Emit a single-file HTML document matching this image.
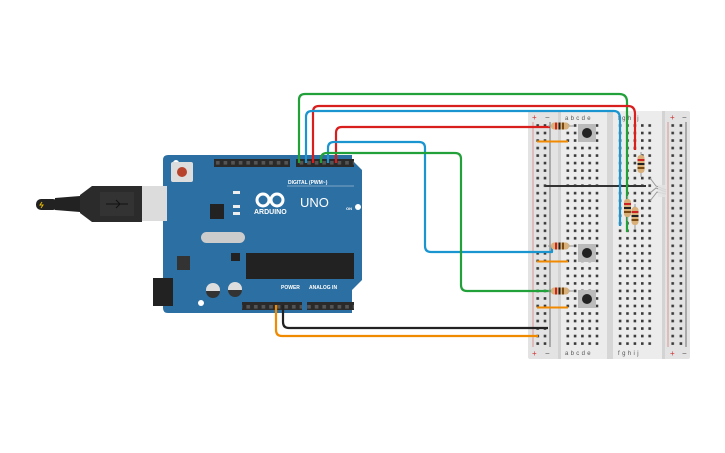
<!DOCTYPE html>
<html><head><meta charset="utf-8"><style>
html,body{margin:0;padding:0;background:#fff;overflow:hidden}
svg{display:block;font-family:"Liberation Sans",sans-serif}
</style></head><body>
<svg width="725" height="453" viewBox="0 0 725 453" xmlns="http://www.w3.org/2000/svg">
<defs>
<pattern id="hd" x="0" y="0" width="7.3" height="7.52" patternUnits="userSpaceOnUse" patternTransform="translate(566.5 122.2)">
<rect x="0" y="2" width="2.6" height="2.6" fill="#3a3a3a"/></pattern>
<pattern id="hd2" x="0" y="0" width="7.4" height="7.52" patternUnits="userSpaceOnUse" patternTransform="translate(618.8 122.2)">
<rect x="0" y="2" width="2.6" height="2.6" fill="#3a3a3a"/></pattern>
<pattern id="rd" x="0" y="0" width="7.3" height="7.52" patternUnits="userSpaceOnUse" patternTransform="translate(536.4 122.2)">
<rect x="0" y="2" width="2.6" height="2.6" fill="#3a3a3a"/></pattern>
<pattern id="rd2" x="0" y="0" width="8.2" height="7.52" patternUnits="userSpaceOnUse" patternTransform="translate(671.4 122.2)">
<rect x="0" y="2" width="2.6" height="2.6" fill="#3a3a3a"/></pattern>
<pattern id="pin" x="0" y="0" width="7.6" height="8" patternUnits="userSpaceOnUse" patternTransform="translate(214 159)">
<rect x="0" y="0" width="7.6" height="8" fill="#2a2a2a"/><rect x="2" y="2" width="3.6" height="3.6" fill="#555"/></pattern>
</defs>

<!-- Breadboard -->
<rect x="528" y="111" width="162" height="248" rx="2" fill="#e3e3e3"/>
<rect x="560" y="111" width="48" height="248" fill="#ececec"/>
<rect x="612" y="111" width="50" height="248" fill="#ececec"/>
<rect x="607" y="111" width="6" height="248" fill="#d6d6d6"/>
<rect x="662" y="111" width="3" height="248" fill="#d3d3d3"/>
<rect x="558" y="111" width="3" height="248" fill="#d3d3d3"/>
<line x1="533" y1="122" x2="533" y2="347" stroke="#d98080" stroke-width="0.8"/>
<line x1="550" y1="122" x2="550" y2="347" stroke="#555" stroke-width="0.8"/>
<line x1="668" y1="122" x2="668" y2="347" stroke="#d98080" stroke-width="0.8"/>
<line x1="686" y1="122" x2="686" y2="347" stroke="#555" stroke-width="0.8"/>
<rect x="536" y="122" width="12" height="226" fill="url(#rd)"/>
<rect x="671" y="122" width="13" height="226" fill="url(#rd2)"/>
<rect x="566" y="122" width="34" height="226" fill="url(#hd)"/>
<rect x="618" y="122" width="36" height="226" fill="url(#hd2)"/>
<g font-size="6" fill="#555">
<text x="532" y="120" fill="#c33" font-size="8">+</text><text x="545" y="120" font-size="8">−</text>
<text x="670" y="120" fill="#c33" font-size="8">+</text><text x="682" y="120" font-size="8">−</text>
<text x="532" y="356" fill="#c33" font-size="8">+</text><text x="545" y="356" font-size="8">−</text>
<text x="670" y="356" fill="#c33" font-size="8">+</text><text x="682" y="356" font-size="8">−</text>
<text x="565" y="120" letter-spacing="2.3">abcde</text><text x="565" y="355" letter-spacing="2.3">abcde</text>
<text x="618" y="120" letter-spacing="2.4">fghij</text><text x="618" y="355" letter-spacing="2.4">fghij</text>
</g>

<!-- Buttons -->
<g fill="#bbb">
<rect x="578" y="124" width="18" height="18"/><rect x="578" y="244" width="18" height="18"/><rect x="578" y="290" width="18" height="18"/></g>
<g fill="#222"><circle cx="587" cy="133" r="5"/><circle cx="587" cy="253" r="5"/><circle cx="587" cy="299" r="5"/></g>

<!-- Orange jumpers on breadboard -->
<g stroke="#f08a00" stroke-width="2"><line x1="537" y1="141.5" x2="568" y2="141.5"/><line x1="537" y1="261.5" x2="568" y2="261.5"/><line x1="537" y1="307.5" x2="568" y2="307.5"/></g>
<line x1="545" y1="186" x2="646" y2="186" stroke="#333" stroke-width="2"/>

<!-- Arduino board -->
<path d="M163 160 Q163 155 168 155 L352 155 L352 160 L362 170 L362 280 L352 290 L352 313 L168 313 Q163 313 163 308 Z" fill="#2c6fa2"/>
<circle cx="176" cy="163" r="3" fill="#fff"/><circle cx="358" cy="207" r="3" fill="#fff"/><circle cx="358" cy="293" r="3" fill="#fff"/><circle cx="201" cy="303" r="3" fill="#fff"/>
<rect x="171" y="162" width="22" height="20" rx="2" fill="#ddd"/><circle cx="182" cy="172" r="5" fill="#b8432c"/>
<rect x="214" y="159" width="76" height="8" fill="url(#pin)"/>
<rect x="296" y="159" width="58" height="8" fill="url(#pin)"/>
<rect x="242" y="302" width="60" height="8" fill="url(#pin)"/>
<rect x="307" y="302" width="47" height="8" fill="url(#pin)"/>
<g fill="#fff" font-size="5" font-weight="bold">
<text x="288" y="184">DIGITAL (PWM~)</text>
<text x="281" y="289">POWER</text><text x="309" y="289">ANALOG IN</text>
<text x="254" y="214" font-size="7">ARDUINO</text><text x="300" y="207" font-size="13" font-weight="normal">UNO</text>
<text x="346" y="210" font-size="4">ON</text>
</g>
<line x1="287" y1="186" x2="354" y2="186" stroke="#cfe0ee" stroke-width="0.5"/>
<g fill="none" stroke="#fff" stroke-width="3"><circle cx="263" cy="200" r="6"/><circle cx="277" cy="200" r="6"/></g>
<rect x="210" y="204" width="14" height="15" fill="#222"/>
<rect x="201" y="232" width="44" height="11" rx="5.5" fill="#ccc"/>
<rect x="231" y="253" width="9" height="8" fill="#222"/>
<rect x="177" y="256" width="13" height="14" fill="#333"/>
<rect x="246" y="253" width="108" height="26" fill="#222"/>
<circle cx="213" cy="290" r="7" fill="#ddd"/><path d="M206 291 A7 7 0 0 0 220 291Z" fill="#333"/>
<circle cx="235" cy="289" r="7" fill="#ddd"/><path d="M228 290 A7 7 0 0 0 242 290Z" fill="#333"/>
<rect x="153" y="278" width="20" height="28" fill="#222"/>
<g fill="#eee" font-size="4"><rect x="233" y="191" width="7" height="3"/><rect x="233" y="205" width="7" height="3"/><rect x="233" y="212" width="7" height="3"/></g>

<!-- USB -->
<rect x="140" y="186" width="27" height="35" fill="#dcdcdc"/>
<path d="M80 195 L92 186 L142 186 L142 222 L92 222 L80 213Z" fill="#2b2b2b"/>
<rect x="100" y="192" width="34" height="24" fill="#333"/>
<path d="M55 198 L80 196 L80 212 L55 210Z" fill="#222"/>
<rect x="36" y="199" width="22" height="11" rx="5" fill="#222"/>
<path d="M42 202 L40 205 L43 205 L41 208" stroke="#e6b800" fill="none" stroke-width="1"/>
<path d="M106 204 h22 M116 200 l4 4 l-4 4" stroke="#111" fill="none" stroke-width="1"/>

<!-- Wires -->
<g fill="none" stroke-width="2.2" stroke-linejoin="round">
<path d="M299 163 V100 Q299 94 305 94 H619 Q627 94 627 102 V232" stroke="#22a03a"/>
<path d="M313 163 V112 Q313 106 319 106 H628 Q635 106 635 114 V150" stroke="#d91e1e"/>
<path d="M306 163 V117 Q306 111 312 111 H614 Q620 111 620 119 V226" stroke="#1a95d0"/>
<path d="M336 163 V133 Q336 127 342 127 H550" stroke="#d91e1e"/>
<path d="M328 163 V148 Q328 142 334 142 H419 Q425 142 425 148 V246 Q425 252 431 252 H552 V246" stroke="#1a95d0"/>
<path d="M321 163 V159 Q321 153 327 153 H455 Q461 153 461 159 V285 Q461 291 467 291 H552" stroke="#22a03a"/>
<path d="M283 305 V322 Q283 328 289 328 H548" stroke="#222"/>
<path d="M276 305 V330 Q276 336 282 336 H538" stroke="#f08a00"/>
</g>

<!-- Resistors horizontal -->
<g>
<line x1="548" y1="126" x2="574" y2="126" stroke="#999" stroke-width="1"/>
<rect x="551" y="122.5" width="18" height="7" rx="3" fill="#d9b07a"/>
<rect x="555" y="122.5" width="2" height="7" fill="#c22"/><rect x="558.5" y="122.5" width="2" height="7" fill="#222"/><rect x="562" y="122.5" width="2" height="7" fill="#7a4a10"/>
</g>
<g transform="translate(0 120)">
<line x1="548" y1="126" x2="574" y2="126" stroke="#999" stroke-width="1"/>
<rect x="551" y="122.5" width="18" height="7" rx="3" fill="#d9b07a"/>
<rect x="555" y="122.5" width="2" height="7" fill="#c22"/><rect x="558.5" y="122.5" width="2" height="7" fill="#222"/><rect x="562" y="122.5" width="2" height="7" fill="#7a4a10"/>
</g>
<g transform="translate(0 165)">
<line x1="548" y1="126" x2="574" y2="126" stroke="#999" stroke-width="1"/>
<rect x="551" y="122.5" width="18" height="7" rx="3" fill="#d9b07a"/>
<rect x="555" y="122.5" width="2" height="7" fill="#c22"/><rect x="558.5" y="122.5" width="2" height="7" fill="#222"/><rect x="562" y="122.5" width="2" height="7" fill="#7a4a10"/>
</g>
<!-- Resistors vertical -->
<g>
<line x1="641" y1="152" x2="641" y2="177" stroke="#999"/>
<rect x="637.5" y="155" width="7" height="18" rx="3" fill="#d9b07a"/>
<rect x="637.5" y="159" width="7" height="2" fill="#c22"/><rect x="637.5" y="163" width="7" height="2" fill="#222"/><rect x="637.5" y="167" width="7" height="2" fill="#7a4a10"/>
</g>
<g transform="translate(-13.5 44)">
<line x1="641" y1="152" x2="641" y2="177" stroke="#999"/>
<rect x="637.5" y="155" width="7" height="18" rx="3" fill="#d9b07a"/>
<rect x="637.5" y="159" width="7" height="2" fill="#c22"/><rect x="637.5" y="163" width="7" height="2" fill="#222"/><rect x="637.5" y="167" width="7" height="2" fill="#7a4a10"/>
</g>
<g transform="translate(-6 52)">
<line x1="641" y1="152" x2="641" y2="177" stroke="#999"/>
<rect x="637.5" y="155" width="7" height="18" rx="3" fill="#d9b07a"/>
<rect x="637.5" y="159" width="7" height="2" fill="#c22"/><rect x="637.5" y="163" width="7" height="2" fill="#222"/><rect x="637.5" y="167" width="7" height="2" fill="#7a4a10"/>
</g>
<!-- sensor legs -->
<g stroke="#999" fill="none" stroke-width="1">
<path d="M650 178 L656 186 L666 190"/><path d="M650 193 L656 188 L666 192"/><path d="M650 201 L657 192 L666 194"/>
</g>
<rect x="658" y="185" width="8" height="12" fill="#e4e4e4" opacity="0.8"/>
</svg>
</body></html>
